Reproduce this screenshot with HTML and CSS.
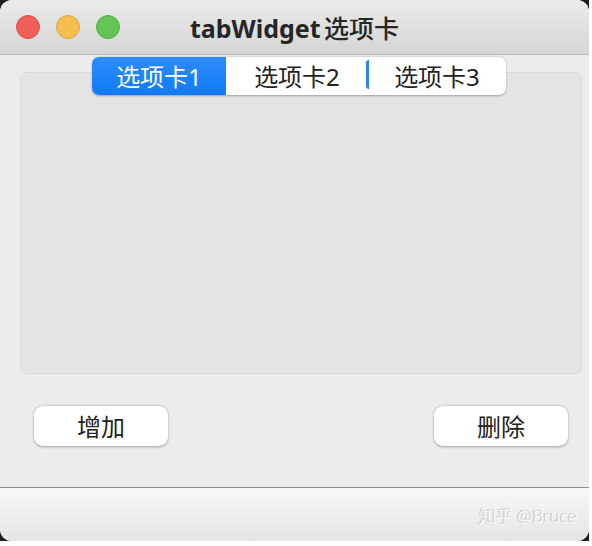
FILE: index.html
```html
<!DOCTYPE html>
<html lang="zh">
<head>
  <meta charset="UTF-8">
  <title>tabWidget选项卡</title>
  <link rel="stylesheet" href="styles.css">
</head>
<body>

  <div class="frame">
    <div class="window">
      <div class="titlebar">
        <div class="lights">
          <span class="light red"></span>
          <span class="light yellow"></span>
          <span class="light green"></span>
        </div>
        <div class="title">tabWidget <span class="cjk">选项卡</span></div>
      </div>

      <div class="content">
        <div class="tabs">
          <div class="tab active">选项卡1</div>
          <div class="tab">选项卡2</div>
          <div class="tab focus">选项卡3</div>
        </div>
        <div class="pane"></div>

        <div class="buttons">
          <button class="btn">增加</button>
          <button class="btn">删除</button>
        </div>
      </div>

      <div class="statusbar">
        <span class="mark">知乎 @Bruce</span>
      </div>
    </div>
  </div>

</body>
</html>
```

FILE: styles.css
```css
* {
  box-sizing: border-box;
  font-family: "Noto Sans", "Noto Sans CJK SC", sans-serif;
}

body {
  margin: 0;
  width: 592px;
  height: 546px;
  background-color: #ffffff;
}

.frame {
  width: 589px;
  height: 541px;
  background-color: #1e1e1e;
}

.window {
  width: 589px;
  height: 541px;
  border-radius: 12px;
  overflow: hidden;
  background-color: #ececec;
  display: flex;
  flex-direction: column;
}

.titlebar {
  height: 55px;
  flex: none;
  background: linear-gradient(#ebebeb, #d5d5d5);
  border-bottom: 1px solid #b9b9b9;
  display: flex;
  align-items: center;
  position: relative;
}

.lights {
  display: flex;
  gap: 16px;
  padding-left: 16px;
}

.light {
  width: 24px;
  height: 24px;
  border-radius: 50%;
}

.red {
  background-color: #ee5f57;
  border: 1px solid #d5524b;
}

.yellow {
  background-color: #f6be4f;
  border: 1px solid #dca440;
}

.green {
  background-color: #62c655;
  border: 1px solid #52ad45;
}

.title {
  position: absolute;
  left: 0;
  right: 0;
  text-align: center;
  font-size: 25px;
  font-weight: bold;
  color: #262626;
  word-spacing: -3px;
}

.title .cjk {
  font-weight: 500;
}

.content {
  flex: 1;
  padding: 2px 7px 0 20px;
  display: flex;
  flex-direction: column;
}

.tabs {
  align-self: center;
  display: flex;
  height: 38px;
  margin-bottom: -23px;
  margin-left: -4px;
  background-color: #fff;
  border-radius: 7px;
  box-shadow: 0 0.5px 2px rgba(0, 0, 0, 0.3);
  position: relative;
  z-index: 1;
}

.tab {
  display: flex;
  align-items: center;
  justify-content: center;
  width: 142px;
  font-size: 24px;
  color: #222;
  position: relative;
  padding-bottom: 2px;
}

.tab.active {
  width: 134px;
  color: #fff;
  background: linear-gradient(#2d8cfb, #117af7);
  border-radius: 7px 0 0 7px;
}

.tab.focus {
  width: 138px;
}

.tab.focus::before {
  content: "";
  position: absolute;
  left: -2px;
  top: 3px;
  bottom: 6px;
  width: 3px;
  border-radius: 3px 0 0 3px;
  background-color: #2a86f3;
}

.pane {
  height: 302px;
  background-color: #e4e4e4;
  border: 1px solid #d9d9d9;
  border-radius: 7px;
}

.buttons {
  display: flex;
  justify-content: space-between;
  padding: 32px 14px 0 14px;
}

.btn {
  width: 134px;
  height: 40px;
  background-color: #fff;
  border: none;
  border-radius: 9px;
  box-shadow: 0 0.5px 2.5px rgba(0, 0, 0, 0.35);
  font-size: 24px;
  color: #222;
  padding: 0 0 2px 0;
}

.statusbar {
  height: 54px;
  flex: none;
  background: linear-gradient(#f8f8f8, #e5e5e5);
  border-top: 1px solid #8f8f8f;
  display: flex;
  justify-content: flex-end;
  align-items: center;
  padding-right: 12px;
}

.mark {
  font-size: 17px;
  font-weight: 300;
  color: #dadada;
  text-shadow: 1px 1px 0 #ffffff, -0.5px -0.5px 0 #c2c2c2;
}
```
